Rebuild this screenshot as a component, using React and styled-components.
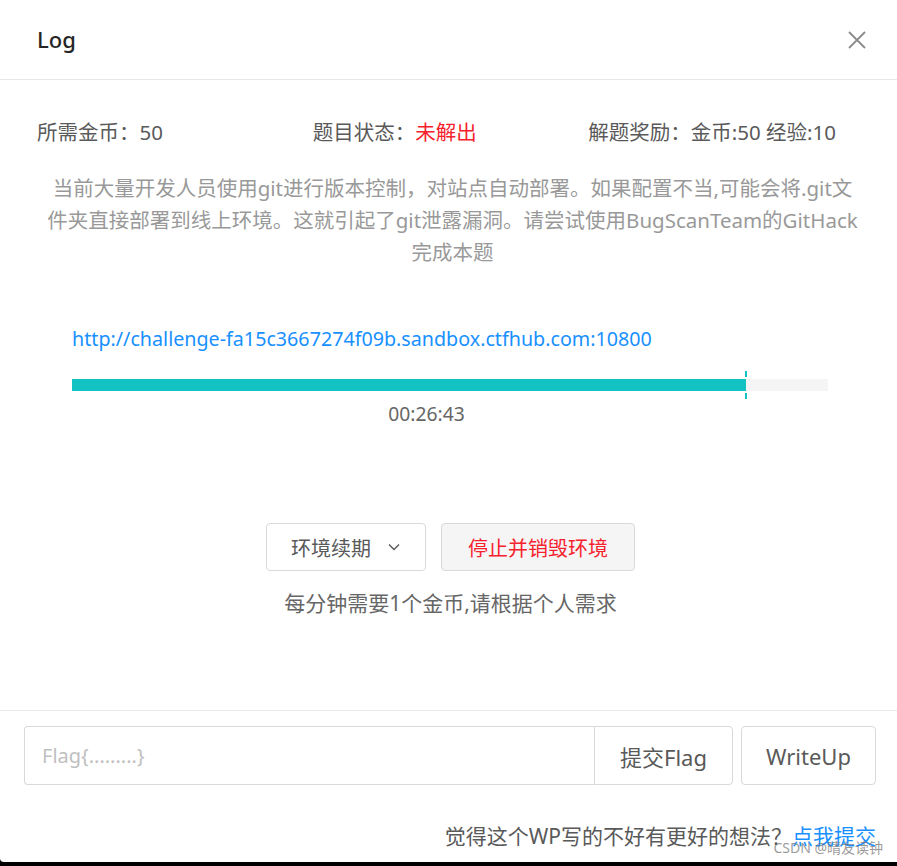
import React from "react";
import styled, { createGlobalStyle } from "styled-components";

const Global = createGlobalStyle`
  html, body { margin: 0; padding: 0; background: #000; }
  body { font-family: "Noto Sans", "Noto Sans CJK SC", sans-serif; }
  * { box-sizing: border-box; }
`;

const Modal = styled.div`
  position: relative;
  width: 897px;
  height: 862px;
  background: #fff;
  border-bottom-left-radius: 4px;
  display: flex;
  flex-direction: column;
`;

const Header = styled.div`
  height: 80px;
  border-bottom: 1px solid #e8e8e8;
  display: flex;
  align-items: center;
  justify-content: space-between;
  padding: 0 30px 0 37px;
`;

const Title = styled.div`
  font-size: 22px;
  color: #262626;
  font-weight: 500;
  margin-top: -1px;
`;

const Close = styled.button`
  border: none;
  background: none;
  padding: 0;
  width: 20px;
  height: 20px;
  display: flex;
  cursor: pointer;
`;

const Body = styled.div`
  height: 631px;
  border-bottom: 1px solid #e8e8e8;
  padding: 38px 33px 0 37px;
  display: flex;
  flex-direction: column;
`;

const Stats = styled.div`
  display: grid;
  grid-template-columns: repeat(3, 1fr);
  font-size: 20.5px;
  color: #595959;
  line-height: 28px;
`;

const Red = styled.span`
  color: #f5222d;
`;

const Desc = styled.p`
  margin: 26px 0 0;
  text-align: center;
  white-space: nowrap;
  color: #999;
  font-size: 20.5px;
  line-height: 32px;
  padding: 0 0 0 4px;
`;

const Link = styled.a`
  display: block;
  margin: 57px 0 0 35px;
  color: #1890ff;
  font-size: 19.7px;
  line-height: 28px;
  text-decoration: none;
`;

const Track = styled.div`
  position: relative;
  margin: 26px 0 0 35px;
  width: 756px;
  height: 12px;
  background: #f5f5f5;
`;

const Fill = styled.div`
  height: 100%;
  background: #13c2c2;
`;

const Marker = styled.div`
  position: absolute;
  top: -8px;
  bottom: -8px;
  width: 2px;
  background: linear-gradient(#13c2c2 0 6px, transparent 6px calc(100% - 6px), #13c2c2 calc(100% - 6px));
`;

const Time = styled.div`
  margin-top: 9px;
  padding-right: 48px;
  text-align: center;
  color: #666;
  font-size: 19.3px;
  line-height: 28px;
`;

const Actions = styled.div`
  margin-top: 95px;
  display: flex;
  justify-content: center;
  gap: 15px;
`;

const Btn = styled.button`
  height: 48px;
  padding: 0 ${(p) => p.$pad}px;
  border: 1px solid #d9d9d9;
  border-radius: 4px;
  background: ${(p) => (p.$bg ? "#f5f5f5" : "#fff")};
  color: ${(p) => (p.$danger ? "#f5222d" : "#595959")};
  font-family: inherit;
  font-size: 20px;
  display: flex;
  align-items: center;
  gap: 16px;
`;

const Hint = styled.div`
  margin-top: 18px;
  text-align: center;
  color: #666;
  font-size: 21px;
  line-height: 28px;
`;

const Footer = styled.div`
  padding: 15px 21px 0 24px;
  display: flex;
  flex-direction: column;
`;

const FlagRow = styled.div`
  display: flex;
  gap: 8px;
`;

const InputGroup = styled.div`
  display: flex;
  flex: 0 0 709px;
`;

const Input = styled.input`
  flex: 1;
  height: 59px;
  border: 1px solid #d9d9d9;
  border-right: none;
  border-radius: 4px 0 0 4px;
  padding: 0 17px;
  font-family: inherit;
  font-size: 20px;
  color: #333;
  outline: none;
  &::placeholder { color: #bfbfbf; }
`;

const AddonBtn = styled.button`
  width: 139px;
  height: 59px;
  border: 1px solid #d9d9d9;
  border-radius: 0 4px 4px 0;
  background: #fff;
  color: #595959;
  font-family: inherit;
  font-size: 22px;
`;

const WriteUp = styled.button`
  width: 135px;
  height: 59px;
  border: 1px solid #d9d9d9;
  border-radius: 4px;
  background: #fff;
  color: #595959;
  font-family: inherit;
  font-size: 22px;
`;

const Feedback = styled.div`
  margin-top: 37px;
  text-align: right;
  color: #595959;
  font-size: 21px;
  line-height: 28px;
`;

const Blue = styled.a`
  color: #1890ff;
  text-decoration: none;
`;

const Watermark = styled.div`
  position: absolute;
  right: 14px;
  bottom: 4px;
  font-size: 14px;
  color: rgba(120, 120, 120, 0.75);
  line-height: 20px;
`;

export default function App() {
  const pct = 89.2;
  return (
    <>
      <Global />
      <Modal>
        <Header>
          <Title>Log</Title>
          <Close aria-label="close">
            <svg width="20" height="20" viewBox="0 0 20 20">
              <path d="M2 2L18 18M18 2L2 18" stroke="#8c8c8c" strokeWidth="1.8" fill="none" />
            </svg>
          </Close>
        </Header>
        <Body>
          <Stats>
            <div>所需金币：50</div>
            <div>
              题目状态：<Red>未解出</Red>
            </div>
            <div>解题奖励：金币:50 经验:10</div>
          </Stats>
          <Desc>
            当前大量开发人员使用git进行版本控制，对站点自动部署。如果配置不当,可能会将.git文
            <br />
            件夹直接部署到线上环境。这就引起了git泄露漏洞。请尝试使用BugScanTeam的GitHack
            <br />
            完成本题
          </Desc>
          <Link href="#">http://challenge-fa15c3667274f09b.sandbox.ctfhub.com:10800</Link>
          <Track>
            <Fill style={{ width: `${pct}%` }} />
            <Marker style={{ left: `calc(${pct}% - 1px)` }} />
          </Track>
          <Time>00:26:43</Time>
          <Actions>
            <Btn $pad={24}>
              环境续期
              <svg width="14" height="14" viewBox="0 0 14 14">
                <path d="M2 4.5L7 9.5L12 4.5" stroke="#595959" strokeWidth="1.4" fill="none" />
              </svg>
            </Btn>
            <Btn $pad={26} $bg $danger>停止并销毁环境</Btn>
          </Actions>
          <Hint>每分钟需要1个金币,请根据个人需求</Hint>
        </Body>
        <Footer>
          <FlagRow>
            <InputGroup>
              <Input placeholder="Flag{.........}" />
              <AddonBtn>提交Flag</AddonBtn>
            </InputGroup>
            <WriteUp>WriteUp</WriteUp>
          </FlagRow>
          <Feedback>
            觉得这个WP写的不好有更好的想法？<Blue href="#">点我提交</Blue>
          </Feedback>
        </Footer>
        <Watermark>CSDN @晴友读钟</Watermark>
      </Modal>
    </>
  );
}
